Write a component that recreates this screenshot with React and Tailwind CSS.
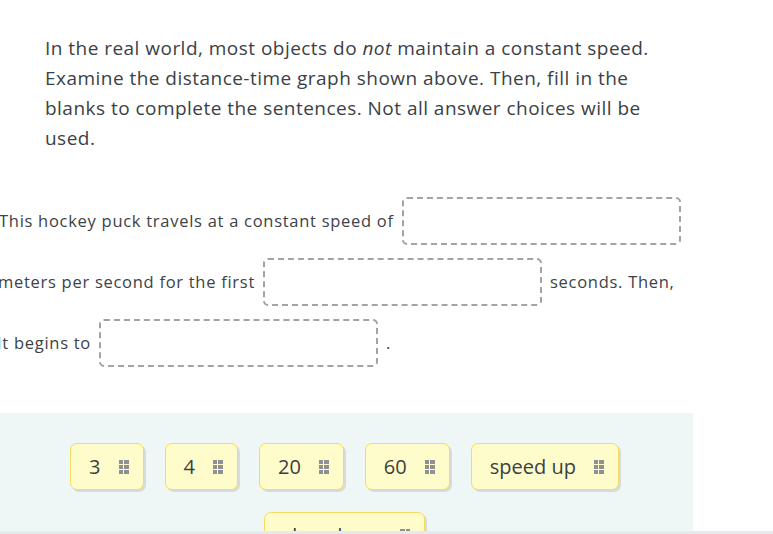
import React from "react";

function Handle() {
  return (
    <div className="grid grid-cols-2 gap-x-[1px] gap-y-[1px]">
      {[0, 1, 2, 3, 4, 5].map((i) => (
        <div key={i} className="w-[4.5px] h-[4px] bg-[#8f9092]" />
      ))}
    </div>
  );
}

function Chip({ label }) {
  return (
    <div className="flex items-center h-[47px] pl-[18px] pr-[14px] gap-[18px] rounded-[7px] border border-[#f7da62] bg-[#fffccc] shadow-[2px_2px_0_#d6dcde] text-[20px] text-[#3b3f42]">
      <span>{label}</span>
      <Handle />
    </div>
  );
}

function Blank() {
  return (
    <div className="w-[279px] h-[48px] rounded-[5px] border-2 border-dashed border-[#a3a3a3] shrink-0" />
  );
}

export default function App() {
  return (
    <div
      className="relative w-[773px] h-[534px] overflow-hidden bg-white text-[#3c4246]"
      style={{ fontFamily: '"Open Sans", "Liberation Sans", sans-serif' }}
    >
      <p className="pl-[45px] pt-[33px] text-[19px] leading-[30px] tracking-[0.47px] text-[#3b4146]">
        In the real world, most objects do <em>not</em> maintain a constant speed.
        <br />
        Examine the distance-time graph shown above. Then, fill in the
        <br />
        blanks to complete the sentences. Not all answer choices will be
        <br />
        used.
      </p>

      <div className="mt-[44px] flex flex-col gap-[13px] text-[16.5px] tracking-[0.72px] text-[#3c4246]">
        <div className="flex items-center h-[48px] gap-[8px] ml-[-1px]">
          <span className="whitespace-nowrap">This hockey puck travels at a constant speed of</span>
          <Blank />
        </div>
        <div className="flex items-center h-[48px] gap-[8px] ml-[-2px]">
          <span className="whitespace-nowrap">meters per second for the first</span>
          <Blank />
          <span className="whitespace-nowrap">seconds. Then,</span>
        </div>
        <div className="flex items-center h-[48px] gap-[8px] ml-[-3px]">
          <span className="whitespace-nowrap">It begins to</span>
          <Blank />
          <span>.</span>
        </div>
      </div>

      <div className="absolute left-0 top-[413px] w-[693px] h-[118px] bg-[#eef6f6] pt-[30px]">
        <div className="flex flex-wrap justify-center gap-x-[21px] gap-y-[22px] pl-[58px] pr-[62px]">
          <Chip label="3" />
          <Chip label="4" />
          <Chip label="20" />
          <Chip label="60" />
          <Chip label="speed up" />
          <Chip label="slow down" />
        </div>
      </div>
      <div className="absolute left-0 bottom-0 w-full h-[3px] bg-[#e6e9ee]" />
    </div>
  );
}
